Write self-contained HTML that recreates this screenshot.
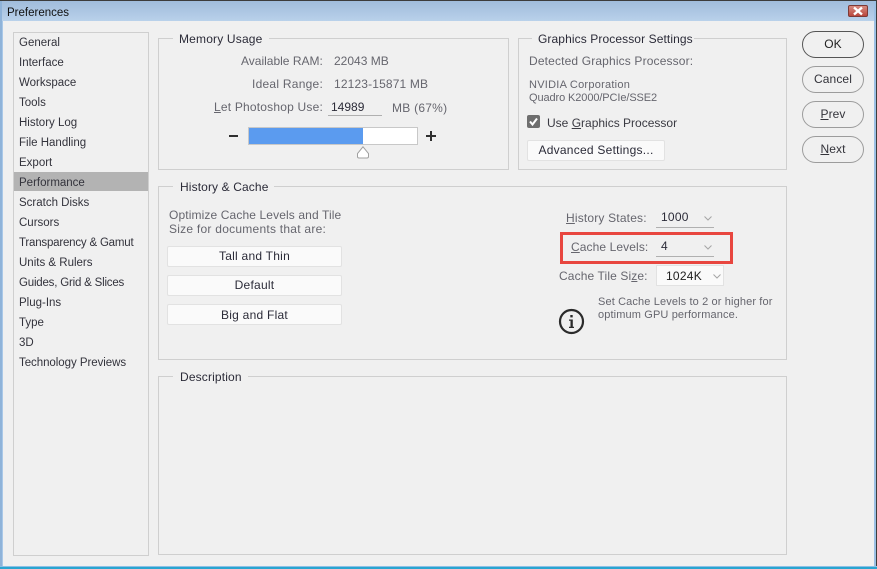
<!DOCTYPE html>
<html><head><meta charset="utf-8"><style>
html,body{margin:0;padding:0;width:877px;height:569px;overflow:hidden;background:#f0f0f0}
#w{position:relative;width:877px;height:569px;overflow:hidden;background:#f0f0f0;font-family:"Liberation Sans",sans-serif;font-size:12px;color:#3a3a42}
#w div,#w span.t{position:absolute;box-sizing:border-box}
.t{white-space:nowrap;line-height:16px;letter-spacing:.25px}
.s{font-size:11.5px;letter-spacing:0;color:#33333c;margin-top:1px}
.d{color:#2b2b38}
.g{color:#66666e}
.z{letter-spacing:0}
.box{border:1px solid #cfcfcf}
.leg{background:#f0f0f0;padding:0 5px;height:14px}
.btn{background:#fafafa;border:1px solid #e2e2e2;border-radius:2px;text-align:center;line-height:19px;color:#2b2b38;letter-spacing:.25px;white-space:nowrap}
.rb{border:1px solid #9c9c9c;border-radius:14px;width:62px;height:27px;text-align:center;line-height:25px;color:#33333a;left:802px;letter-spacing:.1px}
u{text-underline-offset:1px}
.ul{height:1px;background:#b0b0b0}
</style></head><body><div id="w">
<div style="left:0;top:0;width:877px;height:21px;background:linear-gradient(#9fbbdb,#b9d1ea)"></div>
<div style="left:0;top:0;width:877px;height:1px;background:#3c3c3c"></div>
<div style="left:0;top:1px;width:2px;height:568px;background:#8fb3d9"></div>
<div style="left:2px;top:21px;width:1px;height:545px;background:#a9c8e8"></div>
<div style="left:874px;top:1px;width:3px;height:568px;background:#9cc0e4"></div>
<div style="left:876px;top:0;width:1px;height:569px;background:#3c3c3c"></div>
<div style="left:0;top:566px;width:877px;height:1px;background:#8cc0e6"></div>
<div style="left:0;top:567px;width:877px;height:2px;background:#2aa5d0"></div>
<span class="t s" style="left:7px;top:4px;color:#111">Preferences</span>
<div style="left:848px;top:5px;width:20px;height:12px;background:linear-gradient(#d88b80,#b9473d);border:1px solid #7d3a36;border-radius:2px"></div>
<svg style="position:absolute;left:852px;top:6px" width="12" height="10"><path d="M2 1.500L10 8.500M10 1.500L2 8.500" stroke="#fff" stroke-width="2.400"/></svg>

<div class="box" style="left:13px;top:32px;width:136px;height:524px"></div>
<div style="left:14px;top:172px;width:134px;height:19px;background:#b3b3b3"></div>
<span class="t s" style="left:19px;top:34px">General</span>
<span class="t s" style="left:19px;top:54px">Interface</span>
<span class="t s" style="left:19px;top:74px">Workspace</span>
<span class="t s" style="left:19px;top:94px">Tools</span>
<span class="t s" style="left:19px;top:114px">History Log</span>
<span class="t s" style="left:19px;top:134px">File Handling</span>
<span class="t s" style="left:19px;top:154px">Export</span>
<span class="t s" style="left:19px;top:174px">Performance</span>
<span class="t s" style="left:19px;top:194px">Scratch Disks</span>
<span class="t s" style="left:19px;top:214px">Cursors</span>
<span class="t s" style="left:19px;top:234px;letter-spacing:-.2px">Transparency &amp; Gamut</span>
<span class="t s" style="left:19px;top:254px">Units &amp; Rulers</span>
<span class="t s" style="left:19px;top:274px;letter-spacing:-.2px">Guides, Grid &amp; Slices</span>
<span class="t s" style="left:19px;top:294px">Plug-Ins</span>
<span class="t s" style="left:19px;top:314px">Type</span>
<span class="t s" style="left:19px;top:334px">3D</span>
<span class="t s" style="left:19px;top:354px;letter-spacing:-.05px">Technology Previews</span>

<div class="box" style="left:158px;top:38px;width:351px;height:132px"></div>
<div class="leg" style="left:173px;top:32px;width:96px"></div>
<span class="t d" style="left:179px;top:31px;letter-spacing:.18px">Memory Usage</span>
<span class="t g z" style="left:241px;top:53px">Available RAM:</span>
<span class="t g z" style="left:334px;top:53px">22043 MB</span>
<span class="t g" style="left:252px;top:76px">Ideal Range:</span>
<span class="t g" style="left:334px;top:76px;letter-spacing:.15px">12123-15871 MB</span>
<span class="t g" style="left:214px;top:99px;letter-spacing:.2px"><u>L</u>et Photoshop Use:</span>
<span class="t d z" style="left:331px;top:99px">14989</span>
<div class="ul" style="left:328px;top:115px;width:54px"></div>
<span class="t g" style="left:392px;top:100px">MB (67%)</span>
<div style="left:229px;top:135px;width:9px;height:2px;background:#2f2f2f"></div>
<div style="left:248px;top:127px;width:170px;height:18px;border:1px solid #c8c8c8;background:#fff"></div>
<div style="left:249px;top:128px;width:114px;height:16px;background:#5b9bef"></div>
<div style="left:426px;top:135px;width:10px;height:2px;background:#2f2f2f"></div>
<div style="left:430px;top:131px;width:2px;height:10px;background:#2f2f2f"></div>
<svg style="position:absolute;left:356px;top:146px" width="14" height="13"><path d="M7 .8L12.500 7.500V10.500Q12.500 12 11 12H3Q1.500 12 1.500 10.500V7.500Z" fill="#fff" stroke="#a0a0a0"/></svg>

<div class="box" style="left:518px;top:38px;width:269px;height:132px"></div>
<div class="leg" style="left:532px;top:32px;width:162px"></div>
<span class="t d" style="left:538px;top:31px;letter-spacing:.1px">Graphics Processor Settings</span>
<span class="t g" style="left:529px;top:53px;letter-spacing:.15px">Detected Graphics Processor:</span>
<span class="t g" style="left:529px;top:77px;font-size:11px;letter-spacing:.25px">NVIDIA Corporation</span>
<span class="t g" style="left:529px;top:90px;font-size:11px;letter-spacing:-.1px">Quadro K2000/PCIe/SSE2</span>
<div style="left:527px;top:115px;width:13px;height:13px;background:#6e6e6e;border-radius:2px"></div>
<svg style="position:absolute;left:527px;top:115px" width="13" height="13"><path d="M3 6.500L5.500 9.500L10 3.500" fill="none" stroke="#fff" stroke-width="2"/></svg>
<span class="t z" style="left:547px;top:115px"><span>Use <u>G</u>raphics Processor</span></span>
<div class="btn" style="left:527px;top:140px;width:138px;height:21px">Advanced Settings...</div>

<div class="rb" style="top:31px;border-color:#555;color:#222">OK</div>
<div class="rb" style="top:66px">Cancel</div>
<div class="rb" style="top:101px"><u>P</u>rev</div>
<div class="rb" style="top:136px"><u>N</u>ext</div>

<div class="box" style="left:158px;top:186px;width:629px;height:174px"></div>
<div class="leg" style="left:173px;top:180px;width:101px"></div>
<span class="t d" style="left:180px;top:179px;letter-spacing:.12px">History &amp; Cache</span>
<span class="t g" style="left:169px;top:207px;letter-spacing:.12px">Optimize Cache Levels and Tile</span>
<span class="t g" style="left:169px;top:221px">Size for documents that are:</span>
<div class="btn" style="left:167px;top:246px;width:175px;height:21px">Tall and Thin</div>
<div class="btn" style="left:167px;top:275px;width:175px;height:21px">Default</div>
<div class="btn" style="left:167px;top:304px;width:175px;height:21px;line-height:20px">Big and Flat</div>

<span class="t g" style="left:566px;top:210px;letter-spacing:.18px"><u>H</u>istory States:</span>
<span class="t d" style="left:661px;top:209px">1000</span>
<div class="ul" style="left:656px;top:227px;width:58px"></div>
<svg style="position:absolute;left:703px;top:215px" width="10" height="7"><path d="M1.500 1.500L5 5L8.500 1.500" fill="none" stroke="#a5a5a5"/></svg>
<div style="left:560px;top:232px;width:173px;height:32px;border:3px solid #e8463f"></div>
<span class="t g" style="left:571px;top:239px;letter-spacing:.1px"><u>C</u>ache Levels:</span>
<span class="t d" style="left:661px;top:238px">4</span>
<div class="ul" style="left:656px;top:256px;width:58px"></div>
<svg style="position:absolute;left:703px;top:244px" width="10" height="7"><path d="M1.500 1.500L5 5L8.500 1.500" fill="none" stroke="#a5a5a5"/></svg>
<span class="t g" style="left:559px;top:268px;letter-spacing:.12px">Cache Tile Si<u>z</u>e:</span>
<div style="left:656px;top:265px;width:68px;height:21px;background:#fafafa;border:1px solid #e2e2e2"></div>
<span class="t d" style="left:666px;top:268px;color:#222">1024K</span>
<svg style="position:absolute;left:712px;top:273px" width="10" height="7"><path d="M1.500 1.500L5 5L8.500 1.500" fill="none" stroke="#a5a5a5"/></svg>
<span class="t g" style="left:598px;top:294px;font-size:11px;letter-spacing:.13px">Set Cache Levels to 2 or higher for</span>
<span class="t g" style="left:598px;top:307px;font-size:11px;letter-spacing:.13px">optimum GPU performance.</span>
<svg style="position:absolute;left:558px;top:308px" width="27" height="27"><circle cx="13.500" cy="13.500" r="11.500" fill="none" stroke="#2b2b2b" stroke-width="2.200"/><rect x="12.300" y="7" width="2.400" height="2.400" fill="#2b2b2b"/><path d="M11 11.500H14.800V18.800H16V20H11V18.800H12.500V12.700H11Z" fill="#2b2b2b"/></svg>

<div class="box" style="left:158px;top:376px;width:629px;height:179px"></div>
<div class="leg" style="left:173px;top:370px;width:75px"></div>
<span class="t d" style="left:180px;top:369px;letter-spacing:.15px">Description</span>
</div></body></html>
